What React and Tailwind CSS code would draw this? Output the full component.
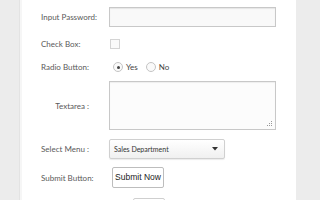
import React from 'react'

function Row({ label, className = "", children, alignRight }) {
    return (
        <div className={`flex items-center shrink-0 ${className}`}>
            <div className={`w-[68px] shrink-0 text-[8px] text-[#5a5a5a] ${alignRight ? "text-right pr-[20px]" : ""}`}>{label}</div>
            <div className="flex-1">{children}</div>
        </div>
    )
}

export default function App() {
    return (
        <div className="w-[320px] h-[200px] overflow-hidden flex bg-[#ececec]" style={{ fontFamily: 'Lato, "Liberation Sans", sans-serif' }}>
            <div className="w-[20px] border-r border-[#e3e3e3]"></div>
            <div className="w-[2px] bg-[#f6f6f6]"></div>
            <div className="w-[274px] bg-white pl-[19px] pr-[20px] flex flex-col">
                <Row label="Input Password:" className="mt-[7px] h-[20px]">
                    <div className="h-[20px] w-[167px] border border-[#c8c8c8] bg-[#f9f9f9] shadow-[inset_0_1px_1px_rgba(0,0,0,0.08)]"></div>
                </Row>
                <Row label="Check Box:" className="mt-[7px] h-[20px]">
                    <div className="ml-[1px] h-[10px] w-[10px] border border-[#d4d4d4] bg-[#fafafa]"></div>
                </Row>
                <Row label="Radio Button:" className="mt-[3px] h-[20px]">
                    <div className="flex items-center text-[8px] text-[#444]">
                        <div className="ml-[4px] h-[10px] w-[10px] rounded-full border border-[#c4c4c4] bg-[#fafafa] flex items-center justify-center">
                            <div className="h-[3px] w-[3px] rounded-full bg-[#444]"></div>
                        </div>
                        <span className="ml-[3px]">Yes</span>
                        <div className="ml-[8px] h-[10px] w-[10px] rounded-full border border-[#c4c4c4] bg-[#fafafa]"></div>
                        <span className="ml-[3px]">No</span>
                    </div>
                </Row>
                <Row label="Textarea :" alignRight className="mt-[4px] h-[49px]">
                    <div className="relative h-[49px] w-[167px] border border-[#c8c8c8] bg-[#fcfcfc] shadow-[inset_0_1px_1px_rgba(0,0,0,0.06)]">
                        <svg className="absolute right-[2px] bottom-[2px]" width="6" height="6" viewBox="0 0 6 6">
                            <rect x="4" y="0" width="1" height="1" fill="#999" />
                            <rect x="2" y="2" width="1" height="1" fill="#999" />
                            <rect x="4" y="2" width="1" height="1" fill="#999" />
                            <rect x="0" y="4" width="1" height="1" fill="#999" />
                            <rect x="2" y="4" width="1" height="1" fill="#999" />
                            <rect x="4" y="4" width="1" height="1" fill="#999" />
                        </svg>
                    </div>
                </Row>
                <Row label="Select Menu :" className="mt-[9px] h-[20px]">
                    <div className="h-[20px] w-[116px] border border-[#d0d0d0] rounded-[2px] bg-gradient-to-b from-white to-[#f0f0f0] shadow-[0_1px_1px_rgba(0,0,0,0.08)] flex items-center">
                        <span className="pl-[4px] flex-1 text-[7px] text-[#333]">Sales Department</span>
                        <div className="w-[18px] h-full flex items-center justify-center">
                            <svg width="6" height="4" viewBox="0 0 6 4"><path d="M0 0H6L3 3.5Z" fill="#333" /></svg>
                        </div>
                    </div>
                </Row>
                <Row label="Submit Button:" className="mt-[8px] h-[21px]">
                    <div className="ml-[3px] h-[21px] w-[52px] border border-[#bdbdbd] rounded-[2px] bg-white flex items-center justify-center text-[8.5px] text-[#222]" style={{ fontFamily: '"Liberation Sans", Arial, sans-serif' }}>Submit Now</div>
                </Row>
                <div className="shrink-0 mt-[10px] ml-[92px] h-[10px] w-[32px] border border-[#cfcfcf] rounded-[2px]"></div>
            </div>
        </div>
    )
}
